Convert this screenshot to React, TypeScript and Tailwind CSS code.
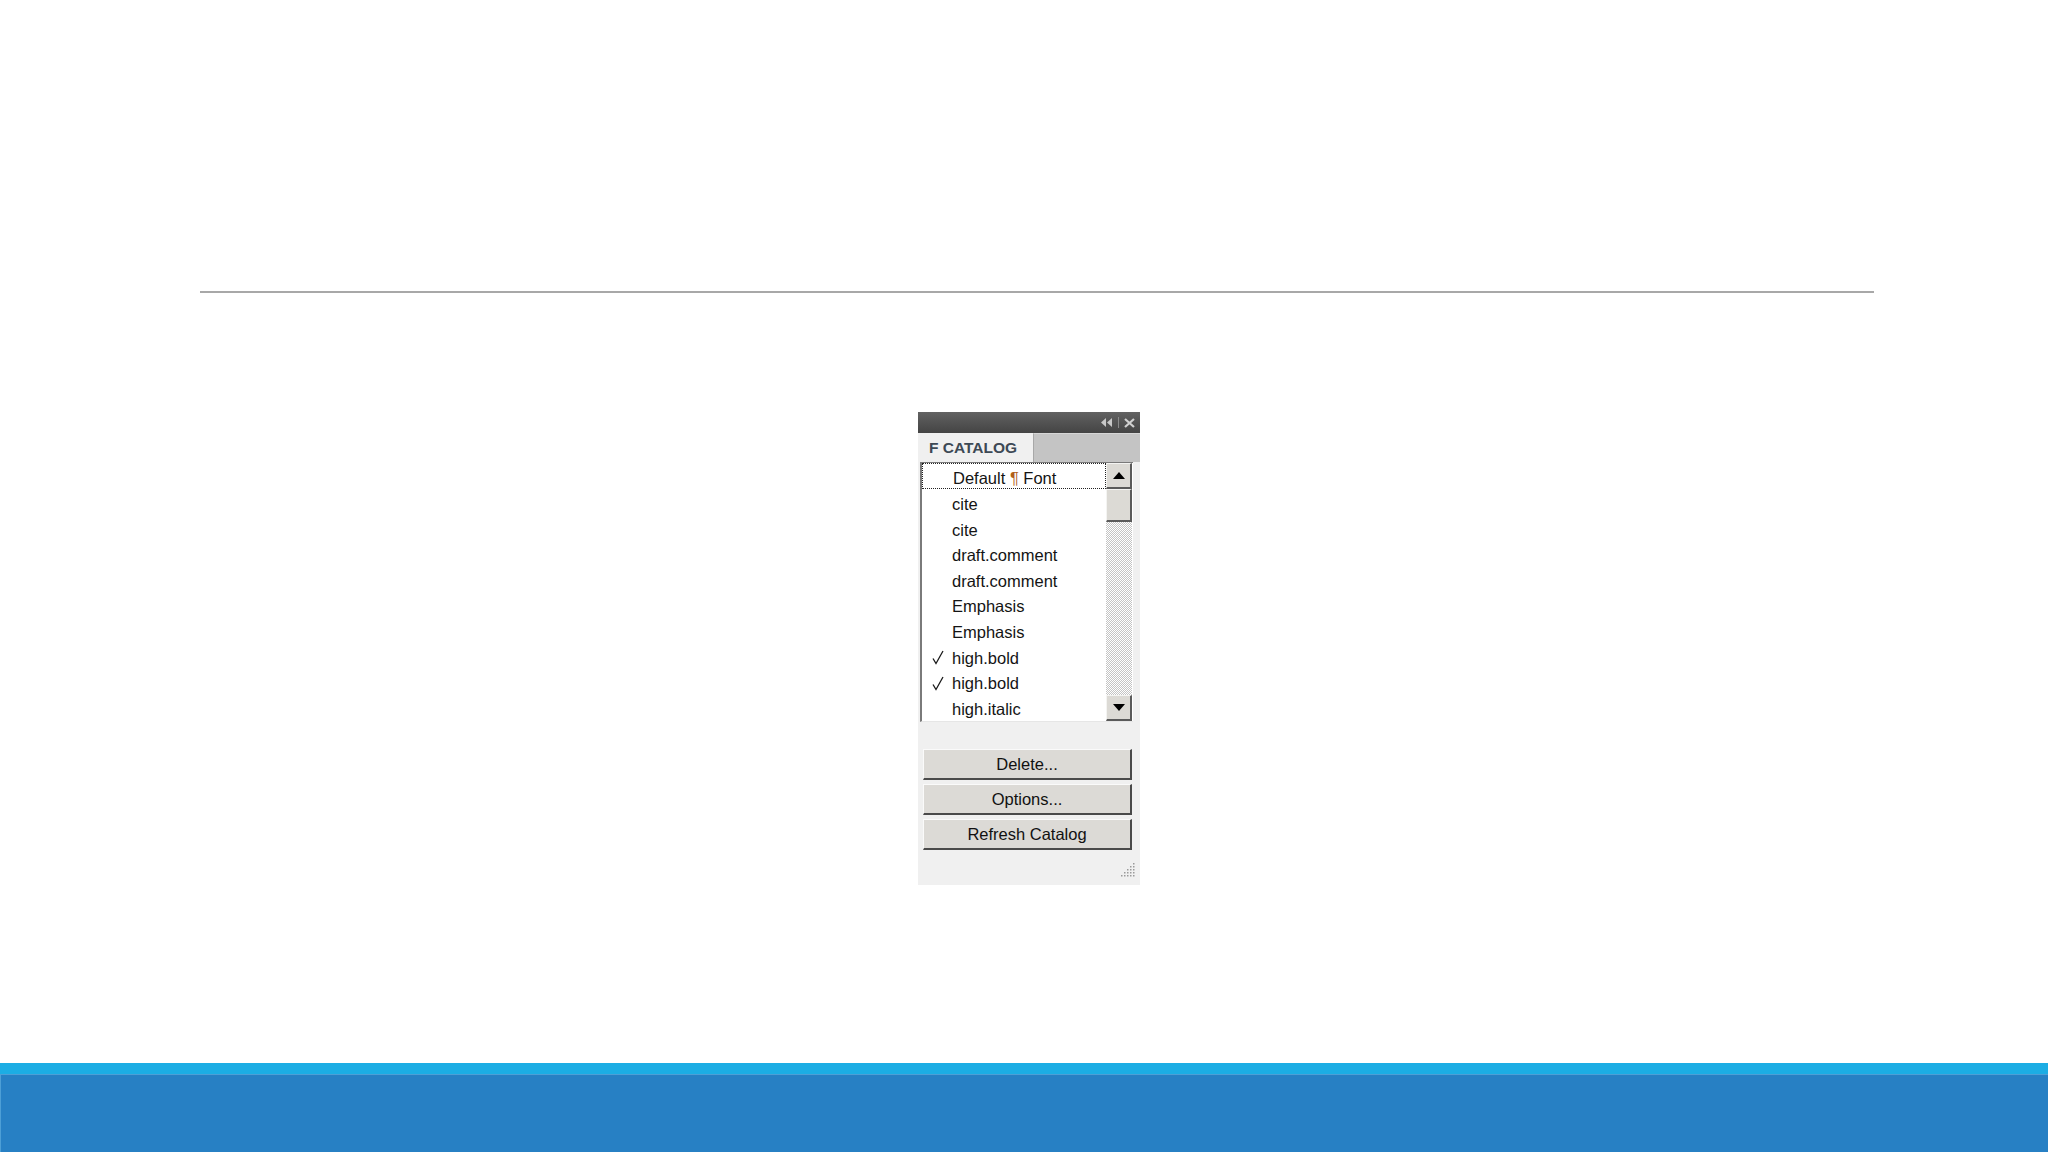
const rows: { label: string; checked?: boolean; para?: boolean }[] = [
  { label: "Default", para: true },
  { label: "cite" },
  { label: "cite" },
  { label: "draft.comment" },
  { label: "draft.comment" },
  { label: "Emphasis" },
  { label: "Emphasis" },
  { label: "high.bold", checked: true },
  { label: "high.bold", checked: true },
  { label: "high.italic" },
];

const font = { fontFamily: '"Liberation Sans", Arial, sans-serif' };

function Check() {
  return (
    <svg width="12" height="15" viewBox="0 0 12 15" className="shrink-0">
      <path d="M1 8.5 L4 13.5 L11 1" fill="none" stroke="#1a1a1a" strokeWidth="1.3" />
    </svg>
  );
}

function ScrollBtn({ dir }: { dir: "up" | "down" }) {
  return (
    <div className="h-[26px] w-[26px] bg-[#dcdad5] border-t-[1px] border-l-[1px] border-[#f4f4f2] border-r-[2px] border-b-[2px] border-r-[#5a5a5a] border-b-[#5a5a5a] flex items-center justify-center">
      <svg width="12" height="7" viewBox="0 0 12 7">
        {dir === "up" ? <path d="M0 7 L6 0 L12 7 Z" fill="#000" /> : <path d="M0 0 L12 0 L6 7 Z" fill="#000" />}
      </svg>
    </div>
  );
}

function Btn({ label }: { label: string }) {
  return (
    <div className="h-[31px] w-[209px] bg-[#dcdad6] border-t-[1px] border-l-[1px] border-[#fafafa] border-r-[2px] border-b-[2px] border-r-[#4a4a4a] border-b-[#4a4a4a] flex items-center justify-center text-[16.5px] text-[#111]">
      {label}
    </div>
  );
}

function Panel() {
  return (
    <div className="w-[222px] h-[473px] bg-[#f0f0f0] flex flex-col" style={font}>
      {/* title bar */}
      <div className="h-[21px] bg-gradient-to-b from-[#626262] to-[#444444] flex items-center justify-end gap-[5px] pr-[5px]">
        <svg width="12" height="9" viewBox="0 0 12 9">
          <path d="M0 4.5 L5 0 L5 9 Z M6 4.5 L11 0 L11 9 Z" fill="#c8c8c8" />
        </svg>
        <div className="w-[1px] h-[11px] bg-[#8a8a8a]" />
        <svg width="11" height="10" viewBox="0 0 11 10">
          <path d="M1 1 L10 9 M10 1 L1 9" stroke="#d0d0d0" strokeWidth="2.2" />
        </svg>
      </div>
      {/* tab row */}
      <div className="h-[29px] flex bg-[#c4c4c4]">
        <div className="w-[115px] bg-[#f0f0f0] flex items-center pl-[11px] text-[15.5px] font-bold text-[#3d4955]">
          F CATALOG
        </div>
        <div className="flex-1 border-t border-[#d6d6d6] border-l border-l-[#a8a8a8]" />
      </div>
      {/* list */}
      <div className="ml-[2px] mr-[7px] h-[260px] flex bg-white border-t-[1px] border-l-[2px] border-[#7a7a7a] border-b border-b-[#e6e6e6]">
        <div className="w-[184px] flex flex-col">
          {rows.map((r, i) => (
            <div
              key={i}
              className={`h-[25.6px] pt-[6px] flex items-center text-[16.5px] text-[#141414] ${i === 0 ? "border border-dotted border-[#222]" : "border border-transparent"}`}
            >
              <div className="w-[29px] pl-[9px] flex items-center">{r.checked && <Check />}</div>
              <span className={i === 0 ? "pl-[1px]" : ""}>
                {r.label}
                {r.para && (
                  <>
                    {" "}
                    <span className="text-[#b0601a]">¶</span> Font
                  </>
                )}
              </span>
            </div>
          ))}
        </div>
        <div className="w-[26px] flex flex-col">
          <ScrollBtn dir="up" />
          <div className="h-[33px] w-[26px] bg-[#dcdad5] border-t-[1px] border-l-[1px] border-[#f4f4f2] border-r-[2px] border-b-[2px] border-r-[#5a5a5a] border-b-[#5a5a5a]" />
          <div className="flex-1 bg-[#e2e2e2] bg-[image:repeating-conic-gradient(#c4c4c4_0%_25%,#ffffff_0%_50%)] bg-[length:2px_2px]" />
          <ScrollBtn dir="down" />
        </div>
      </div>
      {/* buttons */}
      <div className="mt-[27px] ml-[5px] flex flex-col gap-[4px]">
        <Btn label="Delete..." />
        <Btn label="Options..." />
        <Btn label="Refresh Catalog" />
      </div>
      {/* grip */}
      <div className="flex-1 flex items-end justify-end pr-[5px] pb-[8px]">
        <svg width="14" height="14" viewBox="0 0 14 14">
          {[
            [12, 0], [12, 3], [9, 3], [12, 6], [9, 6], [6, 6], [12, 9], [9, 9], [6, 9], [3, 9], [12, 12], [9, 12], [6, 12], [3, 12], [0, 12],
          ].map(([x, y], i) => (
            <rect key={i} x={x} y={y} width="1.5" height="1.5" fill="#9a9a9a" />
          ))}
        </svg>
      </div>
    </div>
  );
}

export default function App() {
  return (
    <div className="w-[2048px] h-[1152px] bg-white flex flex-col overflow-hidden">
      <div className="h-[291px] shrink-0" />
      <div className="ml-[200px] mr-[174px] h-[2px] bg-[#a8a8a8] shrink-0" />
      <div className="mt-[119px] ml-[918px] shrink-0">
        <Panel />
      </div>
      <div className="flex-1" />
      <div className="h-[11px] bg-[#1cade4] shrink-0" />
      <div className="h-[78px] bg-[#2780c4] border-t border-l border-[#4d9fd6] shrink-0" />
    </div>
  );
}
